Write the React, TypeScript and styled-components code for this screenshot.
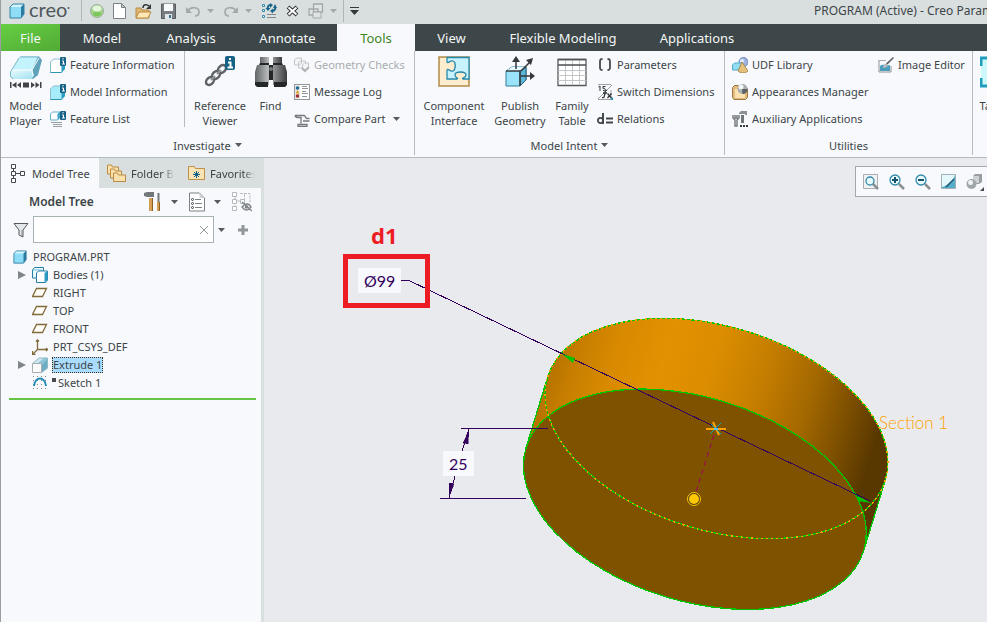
import React from "react";
import styled, { createGlobalStyle } from "styled-components";

const GlobalStyle = createGlobalStyle`
  * { box-sizing: border-box; }
  html, body, #root { height: 100%; }
  body {
    margin: 0;
    overflow: hidden;
    font-family: "Noto Sans", "Open Sans", sans-serif;
    font-size: 11px;
    line-height: 15px;
    color: #3c4548;
    background: #e9eaed;
  }
  button, input { font: inherit; color: inherit; }
  button { background: none; border: 0; padding: 0; margin: 0; white-space: nowrap; }
  svg { display: block; flex: none; }
`;

const Window = styled.div`
  display: flex;
  flex-direction: column;
  height: 100vh;
  border-left: 1px solid #9b9ea0;
`;

/* ---------- title bar ---------- */

const TitleBar = styled.header`
  display: flex;
  flex: none;
  height: 24px;
  background: #d9dfdf;
  overflow: hidden;
`;
const Brand = styled.div`
  display: flex;
  align-items: center;
  width: 81px;
  height: 21px;
  padding-left: 8px;
  border-right: 1px solid #b0b5b6;
  font: 20px/20px "Lato", sans-serif;
  color: #4f5659;
`;
const BrandName = styled.span`
  height: 24px;
  padding-left: 4px;
`;
const QuickBar = styled.nav`
  display: flex;
  align-items: center;
  gap: 9px;
  height: 22px;
  padding: 0 6px 0 8px;
  border-right: 1px solid #b0b5b6;
`;
const QuickGroup = styled.div`
  display: flex;
  align-items: center;
  gap: 6px;
`;
const Title = styled.h1`
  flex: 0 0 173px;
  margin: 0 0 0 auto;
  font-size: 12px;
  font-weight: 400;
  line-height: 22px;
  white-space: nowrap;
  overflow: hidden;
`;
const MoreButton = styled.button`
  display: flex;
  align-items: center;
  height: 21px;
  padding-left: 6px;
`;

/* ---------- ribbon ---------- */

const TabBar = styled.nav`
  display: flex;
  flex: none;
  height: 27px;
  background: #3d4648;
`;
const RibbonTab = styled.button<{ $kind?: "file" | "active"; $width: number }>`
  width: ${(p) => p.$width}px;
  padding-top: 2px;
  font-size: 13px;
  color: ${(p) => (p.$kind === "active" ? "#3c8526" : "#f4f7f7")};
  background: ${(p) =>
    p.$kind === "file"
      ? "linear-gradient(160deg, #65cf42, #52aa36)"
      : p.$kind === "active"
      ? "#f8f9fc"
      : "none"};
`;
const Ribbon = styled.div`
  display: flex;
  flex: none;
  height: 107px;
  padding-bottom: 2px;
  background: #f8f9fc;
  border-bottom: 1px solid #b5bcbe;
  overflow: hidden;
`;
const Group = styled.section<{ $width: number }>`
  display: flex;
  flex-direction: column;
  flex: none;
  width: ${(p) => p.$width}px;
  border-right: 1px solid #b5bcbe;
`;
const GroupBody = styled.div`
  display: flex;
  height: 85px;
`;
const GroupLabel = styled.button`
  display: flex;
  align-items: center;
  justify-content: center;
  gap: 4px;
  height: 20px;
`;
const BigButton = styled.button<{ $width: number }>`
  display: flex;
  flex-direction: column;
  align-items: center;
  gap: 9px;
  width: ${(p) => p.$width}px;
  padding-top: 5px;
  white-space: normal;
`;
const Stack = styled.div<{ $width?: number; $rule?: boolean }>`
  display: flex;
  flex-direction: column;
  width: ${(p) => (p.$width ? p.$width + "px" : "auto")};
  height: 76px;
  margin-right: ${(p) => (p.$rule ? "8px" : "0")};
  border-right: ${(p) => (p.$rule ? "1px solid #b5bcbe" : "0")};
`;
const SmallButton = styled.button`
  display: flex;
  align-items: center;
  gap: 4px;
  flex: 0 0 27px;
  &:disabled { color: #a9adaf; }
`;
const MenuMark = styled.span`
  padding-left: 3px;
`;

/* ---------- work area ---------- */

const Work = styled.div`
  display: flex;
  flex: 1;
  min-height: 0;
`;
const Sidebar = styled.aside`
  flex: 0 0 263px;
  min-width: 0;
  background: #f8f9fc;
  border-right: 3px solid #d9dfdf;
`;
const SideTabs = styled.nav`
  display: flex;
  height: 30px;
  background: #d9dfdf;
`;
const SideTab = styled.button<{ $active?: boolean; $width: number }>`
  display: flex;
  align-items: center;
  gap: ${(p) => (p.$active ? 7 : 5)}px;
  width: ${(p) => p.$width}px;
  padding: ${(p) => (p.$active ? "0 0 0 10px" : "0 6px 0 8px")};
  overflow: hidden;
  background: ${(p) => (p.$active ? "#f8f9fc" : "none")};
`;
const TabText = styled.span<{ $fade?: boolean }>`
  flex: ${(p) => (p.$fade ? "1" : "none")};
  overflow: hidden;
  text-align: left;
  mask-image: ${(p) => (p.$fade ? "linear-gradient(90deg, #000 75%, transparent)" : "none")};
`;
const TreeHead = styled.div`
  display: flex;
  align-items: center;
  gap: 9px;
  height: 27px;
  padding: 0 9px 0 28px;
`;
const TreeTitle = styled.h2`
  flex: 1;
  margin: 0;
  font-size: 12px;
  font-weight: 600;
  white-space: nowrap;
`;
const TreeHeadButton = styled.button`
  padding-left: 2px;
`;
const SearchRow = styled.div`
  display: flex;
  align-items: center;
  gap: 4px;
  height: 29px;
  padding: 0 12px;
`;
const SearchBox = styled.label`
  display: flex;
  align-items: center;
  flex: 1;
  min-width: 0;
  height: 27px;
  padding-right: 4px;
  border: 1px solid #a6b3b3;
  background: #fff;
`;
const SearchInput = styled.input`
  flex: 1;
  min-width: 0;
  border: 0;
  outline: 0;
  background: none;
`;
const Gap = styled.span<{ $w: number }>`
  flex: 0 0 ${(p) => p.$w}px;
`;
const Tree = styled.ul`
  margin: 4px 5px 0 8px;
  padding: 0 0 6px;
  list-style: none;
  border-bottom: 2px solid #65c443;
`;
const TreeRow = styled.li<{ $root?: boolean }>`
  display: flex;
  align-items: center;
  height: 18px;
  gap: ${(p) => (p.$root ? 5 : 4)}px;
  padding-left: ${(p) => (p.$root ? 4 : 9)}px;
`;
const Expander = styled.button`
  display: flex;
  width: 10px;
`;
const Node = styled.button<{ $selected?: boolean }>`
  height: 16px;
  line-height: 14px;
  border: 1px dotted ${(p) => (p.$selected ? "#403020" : "transparent")};
  background: ${(p) => (p.$selected ? "#aadcff" : "none")};
`;
const MarkedNode = styled.span`
  display: flex;
  align-items: center;
  gap: 1px;
`;
const Canvas = styled.main`
  position: relative;
  flex: 1;
  min-width: 0;
  background: #e9eaed;
  & > svg { width: 100%; height: 100%; }
`;
const ViewBar = styled.div`
  position: absolute;
  top: 8px;
  right: 0;
  display: flex;
  align-items: center;
  gap: 8px;
  height: 31px;
  padding: 0 3px 0 6px;
  border: 1px solid #a3a9ab;
  border-right: 0;
  background: #f8f9fc;
`;

/* ---------- icons ---------- */

type IconProps = { w?: number; h?: number; children?: React.ReactNode };
const Icon = ({ w = 16, h = 16, children }: IconProps) => (
  <svg width={w} height={h} viewBox={`0 0 ${w} ${h}`} fill="none" aria-hidden="true">
    {children}
  </svg>
);

const Caret = ({ color = "#555a5c" }: { color?: string }) => (
  <Icon w={7} h={4}><path d="M0 0h7L3.5 4z" fill={color} /></Icon>
);
const Cube = ({ size = 16 }: { size?: number }) => (
  <svg width={size} height={size} viewBox="0 0 16 16" aria-hidden="true">
    <path d="M1 4L4 1h11v10l-3 4H1z" fill="#8edcf5" />
    <path d="M1 4L4 1h11l-3 3z" fill="#d3f5ff" />
    <path d="M12 4l3-3v10l-3 4z" fill="#2a7ca0" />
    <path d="M1 4L4 1h11v10l-3 4H1z" fill="none" stroke="#3580a3" />
  </svg>
);
const InfoBadge = ({ x }: { x: number }) => (
  <g transform={`translate(${x} 0)`}>
    <rect width="6" height="9" rx="1" fill="#166286" />
    <path d="M3 1v1.500M2 4h1.500v3M2 7h3" stroke="#fff" />
  </g>
);
const InfoCube = ({ fill }: { fill: string }) => (
  <Icon>
    <path d="M.5 5l3-3h8l3 2v8l-3 3.500H.5z" fill={fill} stroke="#8abdce" />
    <path d="M11.500 7l3.500-2v7l-3.500 3.500z" fill="#2c9bc2" />
    <path d="M.5 15.500h11" stroke="#2f91b5" />
    <InfoBadge x={10} />
  </Icon>
);
const FeatureListIcon = () => (
  <Icon>
    <path d="M.5 3l2-2h7v6l-2 2h-7z" fill="#fff" stroke="#62b2cf" />
    <path d="M7.500 3l2-2v6l-2 2z" fill="#35a3c8" />
    <path d="M1 11.500h11M3 13.500h9M3 15.500h9" stroke="#9b9fa1" />
    <InfoBadge x={10} />
  </Icon>
);
const PlayerIcon = () => (
  <Icon w={32} h={33}>
    <defs>
      <linearGradient id="face" x2="1" y2="1"><stop stopColor="#e9fcff" /><stop offset="1" stopColor="#9fe0ef" /></linearGradient>
    </defs>
    <path d="M9 2L11 .5h18L32 4l-4 15-5 4H3l-3-3V17z" fill="#5fa3bb" />
    <path d="M9 2L11 .5h17L22 14 1 15z" fill="#c3f3fd" />
    <path d="M1 14h21l2 5-2 4H3l-3-3z" fill="url(#face)" />
    <path d="M1.500 14H22l7-12M22 14l1 6" stroke="#fff" />
    <path d="M10 1h18M9 2L.5 16v4L3 23" stroke="#7db9cb" />
    <path d="M0 26h1.500v6H0zM6.500 26v6L2 29zM11 26v6l-4-3zM13 26.500h6v5h-6zM21 26v6l4-3zM25.500 26v6l4-3zM30 26h1.500v6H30z" fill="#414547" />
  </Icon>
);
const ChainIcon = () => (
  <Icon w={32} h={33}>
    <g stroke="#5f6365" strokeWidth="2.500">
      <ellipse cx="6" cy="25" rx="4.500" ry="3.300" transform="rotate(-45 6 25)" />
      <ellipse cx="12" cy="19" rx="4.500" ry="3.300" transform="rotate(-45 12 19)" />
      <ellipse cx="18" cy="13" rx="4.500" ry="3.300" transform="rotate(-45 18 13)" />
    </g>
    <path d="M7 24l4-4M13 18l4-4" stroke="#8f9496" strokeWidth="2" />
    <rect x="21" y="0" width="10" height="14" rx="2" fill="#166286" />
    <path d="M26 2v2M24 6.500h2.500V11M23.500 11.500H29" stroke="#fff" strokeWidth="2" />
  </Icon>
);
const Binoculars = () => (
  <Icon w={32} h={33}>
    <defs>
      <linearGradient id="bino"><stop stopColor="#606466" /><stop offset=".4" stopColor="#b7babb" /><stop offset="1" stopColor="#3a3c3d" /></linearGradient>
    </defs>
    <path d="M13 9h6v15h-6z" fill="#242627" />
    <path d="M5 1h9v7H5zM18 1h9v7h-9z" fill="url(#bino)" />
    <path d="M2 9h12v20H0V16zM18 9h12l2 7v13H18z" fill="url(#bino)" />
    <path d="M0 26h13v5H2l-2-2zM19 26h13v3l-2 2H19zM5 7h9v2H4zM18 7h9l1 2H18z" fill="#252829" />
    <circle cx="16" cy="13" r="2" fill="#75797b" />
  </Icon>
);
const GeometryChecks = () => (
  <Icon>
    <g fill="#f3f4f5" stroke="#c3c7c9">
      <path d="M.5 3l2-2h5v5l-2 2h-5zM4.500 6l2-2h5v5l-2 2h-5z" />
      <path d="M8.500 8l2-2h4v5l-2 2h-4z" />
    </g>
    <path d="M8 11l3 3 4-4" stroke="#b1b5b7" strokeWidth="2" />
  </Icon>
);
const MessageLogIcon = () => (
  <Icon>
    <rect x=".5" y=".5" width="15" height="15" fill="#fff" stroke="#92979a" />
    <path d="M1 1h5v14H1z" fill="#e7eaeb" />
    <circle cx="3.500" cy="4" r="1.800" fill="#1e6a92" />
    <path d="M3.500 6l2 3.500h-4z" fill="#e3a01d" />
    <circle cx="3.500" cy="12" r="1.800" fill="#a62c23" />
    <path d="M8 2.500h5M8 4.500h6M8 7.500h4M8 9.500h6M8 12.500h5" stroke="#909598" />
  </Icon>
);
const CompareIcon = () => (
  <Icon>
    <path d="M1 4.500h9c2 0 1 3 3 3h2.500M1 4.500c0 2 2 2 6 2v6M9 10h6.500M4 13.500h9v2H4z" stroke="#75797b" strokeWidth="1.300" />
  </Icon>
);
const PuzzleIcon = () => (
  <Icon w={32} h={33}>
    <path d="M1 1h30v29H1z" fill="#fdeccd" stroke="#b18b48" strokeWidth="1.500" />
    <path d="M9 1.500h22V23h-6c-2-1 3-1 3-4 0-4-11-4-11 0 0 3 4 3 2 4H9v-9c1-2 3 2 6 1 3-2 3-9 0-10-3-1-5 3-6 1z" fill="#c9f3fc" stroke="#2389ad" strokeWidth="1.300" />
  </Icon>
);
const PublishIcon = () => (
  <Icon w={32} h={33}>
    <path d="M2 15l6-4h14v13l-6 6H2z" fill="#9be3f8" stroke="#2c7e9c" />
    <path d="M2 15l6-4h14l-6 4z" fill="#e6fbff" />
    <path d="M16 15l6-4v13l-6 6z" fill="#5ab7d8" stroke="#2b617a" />
    <path d="M12 13V4M17 15L27 5M17 20h10" stroke="#34393b" strokeWidth="1.500" />
    <path d="M12 0l4 6H8zM29 2l-2 7-5-5zM31 20l-5-4v8z" fill="#34393b" />
    <path d="M2 15h14v15" stroke="#353b3d" strokeWidth="1.500" />
  </Icon>
);
const TableIcon = () => (
  <Icon w={30} h={33}>
    <path d="M1 3.500h28v26H1z" fill="#fff" stroke="#54595b" strokeWidth="1.300" />
    <path d="M1 14.500h28M1 19.500h28M1 24.500h28M8.500 4v25M15.500 4v25M22.500 4v25" stroke="#c3c7c9" />
    <path d="M1 3.500h28M1 9h28" stroke="#4b5052" strokeWidth="1.500" />
  </Icon>
);
const BracketsIcon = () => (
  <Icon><path d="M5.500 2C3 2 3 3 3 4.500v6C3 12 3 13 5.500 13M10.500 2C13 2 13 3 13 4.500v6c0 1.500 0 2.500-2.500 2.500" stroke="#43494c" strokeWidth="1.800" /></Icon>
);
const SwitchIcon = () => (
  <Icon>
    <path d="M15 1L1 15M1 .5h13M1 15.500h13V6" stroke="#9da2a4" />
    <path d="M1.500 3L3 2v5M8.500 2.500H6v2c3-1 3 2.500 0 2" stroke="#303638" />
    <path d="M10 6.500c-2-1-2 2-2.500 5-.3 2-1 2.500-2.500 2M6 9h4M10.500 9.500l4 4.500M14.500 9.500l-4 4.500" stroke="#303638" strokeWidth="1.300" />
    <path d="M16 13v3h-3z" fill="#238cb1" />
  </Icon>
);
const RelationsIcon = () => (
  <Icon>
    <path d="M6 2v11M9 7.500h7M9 11.500h7" stroke="#43494c" strokeWidth="2" />
    <circle cx="3.500" cy="9.500" r="2.600" stroke="#43494c" strokeWidth="1.800" />
  </Icon>
);
const UdfIcon = () => (
  <Icon>
    <circle cx="11.500" cy="5" r="4.500" fill="#9eb4df" stroke="#6b86b8" />
    <circle cx="10" cy="4" r="2" fill="#e1eaff" />
    <path d="M.5 8l2-2h8v5l-2 2h-8z" fill="#90def4" stroke="#55a9c8" />
    <path d="M10 5l6 9c-3 3-8 2-10 0z" fill="#e5c27c" stroke="#a88c55" />
  </Icon>
);
const AppearancesIcon = () => (
  <Icon>
    <path d="M.5 3.500l2-2h4v3h9v9l-2 2H2l-1.500-2z" fill="#e2ba7c" stroke="#9c7744" />
    <path d="M3 5h10v9H3z" fill="#fbe0b0" />
    <circle cx="10.500" cy="5" r="5" fill="#a9aeb1" />
    <circle cx="9" cy="3" r="2.500" fill="#f4f7f8" />
    <path d="M10 5h5.500c0 3-2 5-5 5z" fill="#5b6164" />
  </Icon>
);
const WrenchIcon = () => (
  <Icon>
    <path d="M1 4v3l2 2v6h2V9l2-2V4M3 4v3h2V4" stroke="#777d80" strokeWidth="1.500" />
    <path d="M7 2l2-2h6v4h-2v-1H7z" fill="#8b9194" />
    <path d="M10.500 4v8" stroke="#6f7679" strokeWidth="3" />
    <path d="M8 14h2v2H8zM11 14h2v2h-2zM14 14h2v2h-2z" fill="#33393b" />
  </Icon>
);
const EditorIcon = () => (
  <Icon>
    <path d="M1 3v12h12V9" stroke="#8c9294" />
    <path d="M2 14V9c3-3 6 0 10-1v6z" fill="#4b9dbc" />
    <path d="M7 9l1.500-3L15 0l1 1-6 6z" fill="#5a6062" />
    <path d="M5 11c0-3 1-4 3-4l2 1c0 2-2 3-5 3z" fill="#b4babd" />
    <path d="M1 3.500h7" stroke="#a6acae" />
  </Icon>
);
const TargetIcon = () => (
  <Icon w={32} h={33}>
    <path d="M1 2h31v28H1z" fill="#cef9fc" />
    <path d="M9 2H1v8M1 22v8h8" stroke="#1f9dbd" strokeWidth="3" />
  </Icon>
);
const BallIcon = () => (
  <Icon w={14} h={14}>
    <circle cx="7" cy="7" r="6.500" fill="#9fd488" stroke="#a3aca2" />
    <ellipse cx="7" cy="4.500" rx="4.500" ry="3" fill="#e2f7da" />
    <ellipse cx="7" cy="10" rx="4" ry="2" fill="#7cc75c" />
  </Icon>
);
const PageIcon = () => (
  <Icon w={13}><path d="M.5.5h8l4 4v11H.5z" fill="#fff" stroke="#7b8184" /><path d="M8.500.5v4h4z" fill="#bfc5c7" stroke="#7b8184" /></Icon>
);
const OpenIcon = () => (
  <Icon w={17}>
    <path d="M1 15V5h5l1 2h7v8z" fill="#e0b673" stroke="#b98a45" />
    <path d="M1 15l3-6h12l-3 6z" fill="#ffe6b3" stroke="#b98a45" />
    <path d="M8 5c0-4 4-4 6-2" stroke="#33393b" strokeWidth="1.500" /><path d="M16 1v5h-5z" fill="#33393b" />
  </Icon>
);
const SaveIcon = () => (
  <Icon w={15}>
    <path d="M.5 1h14v14.500H.5z" fill="#777d80" stroke="#555b5e" />
    <path d="M3 1h9v7H3z" fill="#f8fafb" /><path d="M4 11h7v5H4z" fill="#e3e7e9" /><path d="M8 12h2v3H8z" fill="#356f94" />
  </Icon>
);
const UndoIcon = ({ flip = false }: { flip?: boolean }) => (
  <Icon>
    <g transform={flip ? "matrix(-1 0 0 1 16 0)" : undefined}>
      <path d="M3 8c3-5 11-4 11 1 0 3-2 4-4 4" stroke="#a3a8aa" strokeWidth="1.700" /><path d="M1 4v6h6z" fill="#a3a8aa" />
    </g>
  </Icon>
);
const RegenIcon = () => (
  <Icon>
    <path d="M1.500 1.500h2v2h-2zM1.500 6.500h2v2h-2zM1.500 12.500h2v2h-2z" fill="#fff" stroke="#328aac" />
    <path d="M6 11.500h9M6 14.500h9" stroke="#85898b" />
    <path d="M7 6c-1-3 1-4 3-4M14 4c1 2-1 4-3 4" stroke="#17658a" strokeWidth="2" />
    <path d="M9 0v5l3-3zM12 5.500v5L9 8zM4.500 5h5L7 8zM12 5h4l-2-4z" fill="#17658a" />
  </Icon>
);
const CloseIcon = () => (
  <Icon w={13} h={12}>
    <path d="M2 2l9 8M11 2L2 10" stroke="#303638" strokeWidth="4" /><path d="M2.500 2.500l8 7M10.500 2.500l-8 7" stroke="#fff" strokeWidth="2" />
  </Icon>
);
const WindowsIcon = () => (
  <Icon><path d="M5.500 1h9v8h-9zM1 6h9v6H1z" fill="#dfe3e4" stroke="#a3a8aa" strokeWidth="1.300" /><path d="M5 9h8v6H5z" fill="#dfe3e4" stroke="#a3a8aa" /></Icon>
);
const TreeIcon = () => (
  <Icon w={14} h={19}>
    <path d="M2.500 5v9M5 9.500h4" stroke="#43494c" />
    <path d="M.5.5h4v4h-4zM.5 7.500h4v4h-4zM.5 14.500h4v4h-4zM9.500 7.500h4v4h-4z" fill="#fff" stroke="#43494c" />
  </Icon>
);
const FoldersIcon = () => (
  <Icon w={19} h={18}>
    <g fill="#fae0ab" stroke="#ba8a43">
      <path d="M.5 1h4l1 2h6v7H.5z" /><path d="M3.500 5h4l1 2h6v7h-11z" /><path d="M6.500 9h4l1 2h7v6.500h-12z" />
    </g>
  </Icon>
);
const FavoritesIcon = () => (
  <Icon w={17}>
    <path d="M.5 1.500h6l1 2h9v11H.5z" fill="#fae3b4" stroke="#bd9149" />
    <path d="M8.500 6v7M5 9.500h7M6 7l5 5M11 7l-5 5" stroke="#166286" />
  </Icon>
);
const HammerIcon = () => (
  <Icon w={18} h={20}>
    <path d="M5 6h4v13H5zM13 10h3v9h-3z" fill="#d5a054" />
    <path d="M0 1l3-1h7v5H3L0 4zM13.500 1h2v9h-2z" fill="#727779" />
    <path d="M8.500 6v13M15.500 10v9" stroke="#8e6029" />
  </Icon>
);
const ListPageIcon = () => (
  <Icon w={16} h={20}>
    <path d="M.5 1h10l5 5v13H.5z" fill="#fff" stroke="#7b8184" /><path d="M10.500 1v5h5z" fill="#cdd2d4" />
    <path d="M6 7.500h6M6 11.500h7M6 15.500h7" stroke="#7b8184" />
    <circle cx="3.500" cy="7.500" r="1" stroke="#3b4143" /><circle cx="3.500" cy="11.500" r="1" stroke="#3b4143" /><circle cx="3.500" cy="15.500" r="1" stroke="#3b4143" />
  </Icon>
);
const HiddenTreeIcon = () => (
  <Icon w={20} h={20}>
    <path d="M3 5v9M5 9h4M8 1.500h10v10M12.500 2v10" stroke="#bbc1c3" strokeDasharray="3 1" />
    <path d="M.5.5h4v4h-4zM.5 7.500h4v4h-4zM.5 14.500h4v4h-4zM8.500 7.500h4v4h-4z" fill="#fff" stroke="#b3b9bb" />
    <path d="M10 15c3-4 7-4 9 0-3 4-6 4-9 0zM10 10l10 9" stroke="#7d8386" strokeWidth="1.300" /><circle cx="14.500" cy="15" r="1.800" fill="#7d8386" />
  </Icon>
);
const FunnelIcon = () => (
  <Icon><path d="M1 1.500h14L10 8v7l-4-2V8z" fill="#e3e7e9" stroke="#555b5e" /><path d="M9 8v6" stroke="#858c8f" /></Icon>
);
const BodiesIcon = () => (
  <Icon>
    <path d="M.5 3l2-2.500h9v8l-2 2.500h-9z" fill="#e9fbff" stroke="#247fa6" />
    <path d="M.5 3h9V11" stroke="#76bcd6" />
    <path d="M4.500 6l2-2h9v9l-2 2.500h-9z" fill="#fff" stroke="#247fa6" /><path d="M12.500 6l3-2v9l-3 2.500z" fill="#2a9dc7" />
  </Icon>
);
const PlaneIcon = () => (
  <Icon><path d="M4.500 3.500h10l-4 8H.5z" fill="#fffdf7" stroke="#816b3a" strokeWidth="1.300" /></Icon>
);
const CsysIcon = () => (
  <Icon><path d="M5.500 10.500V1M5.500 10.500H15M5.500 10.500L1 15M4 2.500L5.500 1 7 2.500M14 9l1.500 1.500L14 12M.5 12v3.500h3" stroke="#816b3a" strokeWidth="1.300" /></Icon>
);
const ExtrudeIcon = () => (
  <Icon>
    <path d="M1 6l6-5h9v10l-6 5z" fill="#cfe8f0" /><path d="M6 6l6-5h4v3l-6 5z" fill="#8cc4d8" /><path d="M10 8l6-6v9l-6 4z" fill="#6daec4" />
    <path d="M.5 6.500h9v9h-9z" fill="#fbfbfa" stroke="#a9afb1" />
    <path d="M1 6l6-5h8.500v10l-6 4.500" stroke="#8fb9c7" />
  </Icon>
);
const SketchIcon = () => (
  <Icon>
    <path d="M1 1.500h15M1 5.500h15M1 9.500h15M1 13.500h15" stroke="#81888b" strokeDasharray="1 3" />
    <path d="M2 11c1-10 11-10 12 0" stroke="#248bb5" strokeWidth="2" />
  </Icon>
);
const ZoomIcon = ({ sign, boxed = false }: { sign?: "+" | "-"; boxed?: boolean }) => (
  <Icon w={18} h={18}>
    {boxed && <path d="M1.500 1.500h14v14h-14z" fill="#f0f2f3" stroke="#a9afb1" />}
    <path d="M11 11l5 5" stroke="#8b9093" strokeWidth="2.500" />
    <circle cx={boxed ? 8 : 7} cy={boxed ? 8 : 7} r={boxed ? 4 : 5} fill="#e9faff" stroke="#3489aa" strokeWidth="1.300" />
    {sign && <path d={sign === "+" ? "M4 7h6M7 4v6" : "M4 7h6"} stroke="#16516d" strokeWidth="2" />}
  </Icon>
);
const RepaintIcon = () => (
  <Icon w={18} h={18}>
    <path d="M1.500 1.500h14v14h-14z" fill="#55adc8" stroke="#9fb0b6" />
    <path d="M2 2h13c-2 6-6 10-13 12z" fill="#e4f7fb" /><path d="M14 6l-8 8" stroke="#17546f" strokeWidth="1.500" />
  </Icon>
);
const StyleIcon = () => (
  <Icon w={18} h={18}>
    <path d="M7 3l2-2h7v8l-3 2H7z" fill="#999ea0" /><path d="M7 3h6v7H7z" fill="#cdd1d2" />
    <circle cx="5.500" cy="11" r="5" fill="#a0a6a9" /><circle cx="4.500" cy="9.500" r="2.500" fill="#eff1f2" />
    <path d="M18 14v4h-4z" fill="#454b4e" />
  </Icon>
);

/* ---------- model drawing ---------- */

const Model = () => (
  <svg viewBox="264 158 723 464" preserveAspectRatio="xMidYMid meet" role="img" aria-label="Extruded disc with dimensions">
    <defs>
      <linearGradient id="wall" gradientUnits="userSpaceOnUse" x1="-177" y1="0" x2="177" y2="0">
        <stop offset="0" stopColor="#b57300" />
        <stop offset=".06" stopColor="#c67d00" />
        <stop offset=".16" stopColor="#d78900" />
        <stop offset=".3" stopColor="#e29100" />
        <stop offset=".44" stopColor="#db8d00" />
        <stop offset=".58" stopColor="#c67e00" />
        <stop offset=".72" stopColor="#a56900" />
        <stop offset=".84" stopColor="#7d4f00" />
        <stop offset=".94" stopColor="#593800" />
        <stop offset="1" stopColor="#593800" />
      </linearGradient>
    </defs>
    <g transform="translate(716.500 428.500) rotate(17)" fill="none" shapeRendering="crispEdges" strokeWidth="1.300">
      <path d="M-176.500 0A176.500 101.800 0 0 1 176.500 0V74H-176.500z" fill="url(#wall)" />
      <path d="M-176.500 0V74M176.500 0V74" stroke="#00c400" />
      <ellipse cy="74" rx="176.500" ry="101.800" fill="#7f5200" stroke="#00c400" />
      <ellipse rx="176.500" ry="101.800" stroke="#00c400" />
      <ellipse rx="176.500" ry="101.800" stroke="#ffa200" strokeDasharray="2 3" />
    </g>
    <g stroke="#33005c" fill="none" shapeRendering="crispEdges">
      <path d="M401 280.500h8L870 501M461 428.500h87M440 498.500h86M469 429l-7 22M455 476l-6 22" />
      <path d="M469 430l-6 13 5 1zM449 497l5-13-5-1z" fill="#33005c" strokeWidth=".5" />
    </g>
    <path d="M562 354l13 4-2 5zM871 503l-13-7v5z" fill="#00c400" />
    <path d="M714 435l-19 60" stroke="#a0005c" strokeDasharray="5 4" />
    <g fill="none">
      <path d="M706 429h20M713 422l6 13" stroke="#ffa200" strokeWidth="2" />
      <path d="M711 424l10 10M721 423l-11 11" stroke="#00a9b5" />
      <path d="M714 429h4" stroke="#4dc1f5" strokeWidth="2" />
    </g>
    <circle cx="694" cy="499" r="6.500" fill="#51411a" stroke="#ffc800" />
    <circle cx="694" cy="499" r="5" fill="#ffc800" />
    <path d="M358 268h43v25h-43zM443 451h31v25h-31z" fill="#f8f9fc" />
    <g fontFamily="Lato, sans-serif">
      <text x="364" y="287" fill="#33005c" fontSize="16">Ø99</text>
      <text x="449" y="470" fill="#33005c" fontSize="16">25</text>
      <text x="879" y="429" fill="#ffa200" fontWeight="300" fontSize="17">Section 1</text>
    </g>
    <rect x="345.500" y="256.500" width="82" height="49" fill="none" stroke="#ed1c24" strokeWidth="5" />
    <text x="371" y="244" fill="#ed1c24" fontFamily="Noto Sans, sans-serif" fontWeight="700" fontSize="22">d1</text>
  </svg>
);

/* ---------- data ---------- */

const ribbonTabs: { label: string; width: number; kind?: "file" | "active" }[] = [
  { label: "File", width: 59, kind: "file" },
  { label: "Model", width: 84 },
  { label: "Analysis", width: 94 },
  { label: "Annotate", width: 99 },
  { label: "Tools", width: 78, kind: "active" },
  { label: "View", width: 73 },
  { label: "Flexible Modeling", width: 150 },
  { label: "Applications", width: 118 },
];

const treeNodes: { label: string; icon: React.ReactNode; open?: boolean; selected?: boolean; marker?: boolean }[] = [
  { label: "Bodies (1)", icon: <BodiesIcon />, open: true },
  { label: "RIGHT", icon: <PlaneIcon /> },
  { label: "TOP", icon: <PlaneIcon /> },
  { label: "FRONT", icon: <PlaneIcon /> },
  { label: "PRT_CSYS_DEF", icon: <CsysIcon /> },
  { label: "Extrude 1", icon: <ExtrudeIcon />, open: true, selected: true },
  { label: "Sketch 1", icon: <SketchIcon />, marker: true },
];

const Command = ({ icon, label, disabled, menu }: { icon: React.ReactNode; label: string; disabled?: boolean; menu?: boolean }) => (
  <SmallButton disabled={disabled}>{icon}{label}{menu && <MenuMark><Caret /></MenuMark>}</SmallButton>
);

export default function App() {
  return (
    <>
      <GlobalStyle />
      <Window>
        <TitleBar>
          <Brand>
            <Cube />
            <BrandName>creo</BrandName>
            <Icon w={3} h={12}><circle cx="1.500" cy="3" r="1" fill="#4f5659" /></Icon>
          </Brand>
          <QuickBar>
            <button aria-label="Status"><BallIcon /></button>
            <button aria-label="New"><PageIcon /></button>
            <button aria-label="Open"><OpenIcon /></button>
            <button aria-label="Save"><SaveIcon /></button>
            <QuickGroup>
              <button aria-label="Undo"><UndoIcon /></button><Caret color="#a3a8aa" />
            </QuickGroup>
            <QuickGroup>
              <button aria-label="Redo"><UndoIcon flip /></button><Caret color="#a3a8aa" />
            </QuickGroup>
            <button aria-label="Regenerate"><RegenIcon /></button>
            <button aria-label="Close"><CloseIcon /></button>
            <QuickGroup>
              <button aria-label="Windows"><WindowsIcon /></button><Caret color="#a3a8aa" />
            </QuickGroup>
          </QuickBar>
          <MoreButton aria-label="Customize toolbar">
            <Icon w={9} h={8}><path d="M0 .5h9" stroke="#33393b" /><path d="M0 3h9L4.500 8z" fill="#33393b" /></Icon>
          </MoreButton>
          <Title>PROGRAM (Active) - Creo Parametric</Title>
        </TitleBar>
        <TabBar>
          {ribbonTabs.map((t) => (
            <RibbonTab key={t.label} $width={t.width} $kind={t.kind}>{t.label}</RibbonTab>
          ))}
        </TabBar>
        <Ribbon>
          <Group $width={414}>
            <GroupBody>
              <BigButton $width={49}><PlayerIcon />Model Player</BigButton>
              <Stack $width={135} $rule>
                <Command icon={<InfoCube fill="#fff" />} label="Feature Information" />
                <Command icon={<InfoCube fill="#a6ecfa" />} label="Model Information" />
                <Command icon={<FeatureListIcon />} label="Feature List" />
              </Stack>
              <BigButton $width={54}><ChainIcon />Reference Viewer</BigButton>
              <BigButton $width={47}><Binoculars />Find</BigButton>
              <Stack>
                <Command icon={<GeometryChecks />} label="Geometry Checks" disabled />
                <Command icon={<MessageLogIcon />} label="Message Log" />
                <Command icon={<CompareIcon />} label="Compare Part" menu />
              </Stack>
            </GroupBody>
            <GroupLabel>Investigate<Caret /></GroupLabel>
          </Group>
          <Group $width={310}>
            <GroupBody>
              <BigButton $width={78}><PuzzleIcon />Component Interface</BigButton>
              <BigButton $width={54}><PublishIcon />Publish Geometry</BigButton>
              <BigButton $width={50}><TableIcon />Family Table</BigButton>
              <Stack>
                <Command icon={<BracketsIcon />} label="Parameters" />
                <Command icon={<SwitchIcon />} label="Switch Dimensions" />
                <Command icon={<RelationsIcon />} label="Relations" />
              </Stack>
            </GroupBody>
            <GroupLabel>Model Intent<Caret /></GroupLabel>
          </Group>
          <Group $width={248}>
            <GroupBody>
              <Gap $w={7} />
              <Stack $width={146}>
                <Command icon={<UdfIcon />} label="UDF Library" />
                <Command icon={<AppearancesIcon />} label="Appearances Manager" />
                <Command icon={<WrenchIcon />} label="Auxiliary Applications" />
              </Stack>
              <Stack>
                <Command icon={<EditorIcon />} label="Image Editor" />
              </Stack>
            </GroupBody>
            <GroupLabel>Utilities</GroupLabel>
          </Group>
          <Group $width={60}>
            <GroupBody>
              <Gap $w={6} />
              <BigButton $width={34}><TargetIcon />Target</BigButton>
            </GroupBody>
          </Group>
        </Ribbon>
        <Work>
          <Sidebar>
            <SideTabs>
              <SideTab $active $width={98}><TreeIcon /><TabText>Model Tree</TabText></SideTab>
              <SideTab $width={81}><FoldersIcon /><TabText $fade>Folder Browser</TabText></SideTab>
              <SideTab $width={81}><FavoritesIcon /><TabText $fade>Favorites</TabText></SideTab>
            </SideTabs>
            <TreeHead>
              <TreeTitle>Model Tree</TreeTitle>
              <button aria-label="Tree tools"><HammerIcon /></button><Caret />
              <TreeHeadButton aria-label="Tree display"><ListPageIcon /></TreeHeadButton><Caret />
              <TreeHeadButton aria-label="Hidden items"><HiddenTreeIcon /></TreeHeadButton>
            </TreeHead>
            <SearchRow>
              <button aria-label="Filter"><FunnelIcon /></button>
              <SearchBox>
                <SearchInput aria-label="Search tree" />
                <button aria-label="Clear"><Icon w={10} h={10}><path d="M1 1l8 8M9 1L1 9" stroke="#919698" /></Icon></button>
              </SearchBox>
              <button aria-label="Search options"><Caret /></button>
              <Gap $w={4} />
              <button aria-label="Add"><Icon w={12} h={12}><path d="M6 1v10M1 6h10" stroke="#919698" strokeWidth="3" /></Icon></button>
            </SearchRow>
            <Tree>
              <TreeRow $root><Cube size={14} /><Node>PROGRAM.PRT</Node></TreeRow>
              {treeNodes.map((n) => (
                <TreeRow key={n.label}>
                  <Expander aria-label={n.open ? "Expand " + n.label : undefined} disabled={!n.open}>
                    <Icon w={9} h={10}>{n.open && <path d="M0 1l8 4-8 4z" fill="#808588" />}</Icon>
                  </Expander>
                  {n.icon}
                  <MarkedNode>
                    {n.marker && <Icon w={4} h={12}><path d="M0 1h4v4H0z" fill="#454b4e" /></Icon>}
                    <Node $selected={n.selected}>{n.label}</Node>
                  </MarkedNode>
                </TreeRow>
              ))}
            </Tree>
          </Sidebar>
          <Canvas>
            <Model />
            <ViewBar>
              <button aria-label="Refit"><ZoomIcon boxed /></button>
              <button aria-label="Zoom in"><ZoomIcon sign="+" /></button>
              <button aria-label="Zoom out"><ZoomIcon sign="-" /></button>
              <button aria-label="Repaint"><RepaintIcon /></button>
              <button aria-label="Display style"><StyleIcon /></button>
            </ViewBar>
          </Canvas>
        </Work>
      </Window>
    </>
  );
}
